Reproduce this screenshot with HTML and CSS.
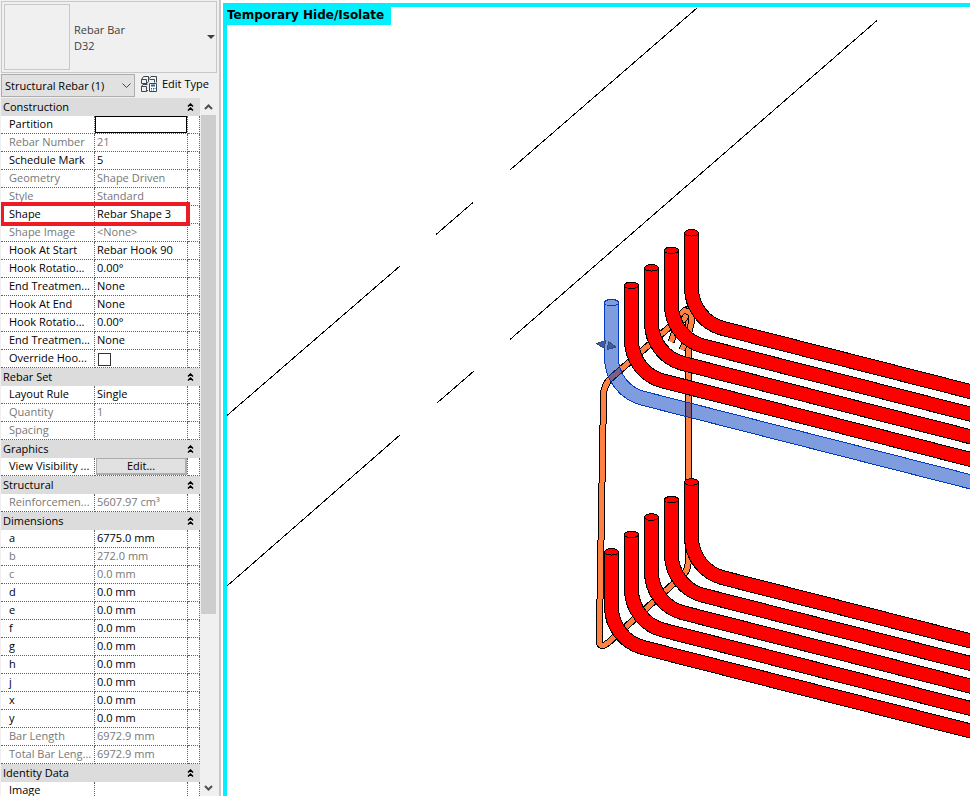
FILE: index.html
```
<!DOCTYPE html>
<html lang="en">
<head>
    <meta charset="UTF-8">
    <meta name="viewport" content="width=device-width, initial-scale=1.0">
    <title>Rebar Properties</title>
    <link rel="stylesheet" href="styles.css">
</head>
<body>
    <div class="app">
        <aside class="properties">
            <button class="type-selector" type="button">
                <span class="type-preview"></span>
                <span class="type-name">Rebar Bar<br>D32</span>
                <svg class="type-arrow" width="8" height="4" viewBox="0 0 8 4"><path d="M0 0H8L4 4Z" fill="#404040"/></svg>
            </button>

            <div class="filter-bar">
                <div class="filter">
                    <select aria-label="Element filter">
                        <option>Structural Rebar (1)</option>
                    </select>
                    <svg width="9" height="6" viewBox="0 0 9 6"><path d="M0.5 0.5L4.5 4.5L8.5 0.5" fill="none" stroke="#444"/></svg>
                </div>
                <button class="edit-type" type="button">
                    <svg width="16" height="16" viewBox="0 0 16 16" fill="none" stroke="#3c4650">
                        <path d="M0.5 3.5L2.5 0.5H7.5V5.5L6 7.5H0.5ZM0.5 3.5H5.5V7.5M8.5 2.5L10 0.5H15.5V6.5M8.5 3.5H13.5V6.5M0.5 10.5L2 8.5H6.5M0.5 10.5H5.5V15.5H0.5ZM5.5 15.5L7 14"/>
                        <path d="M8.5 7.5H15.5V15.5H8.5Z" fill="#fff"/>
                        <path d="M10 9.5H14" stroke="#1c62b9" stroke-width="2"/>
                        <path d="M10 12.5H11M12 12.5H13M13.5 12.5H14.5M10 14H11M12 14H13" stroke="#1c62b9"/>
                    </svg>
                    Edit Type
                </button>
            </div>

            <div class="grid-area">
                <table class="grid">
                    <colgroup><col class="col-name"><col class="col-value"><col class="col-extra"></colgroup>
                    <tbody>
                        <tr class="group"><th colspan="3"><button type="button">Construction <svg class="chevrons"><use href="#chevrons"/></svg></button></th></tr>
                        <tr><td><label for="partition">Partition</label></td><td class="editing"><input type="text" id="partition"></td><td></td></tr>
                        <tr class="off"><td>Rebar Number</td><td>21</td><td></td></tr>
                        <tr><td>Schedule Mark</td><td>5</td><td></td></tr>
                        <tr class="off"><td>Geometry</td><td>Shape Driven</td><td></td></tr>
                        <tr class="off"><td>Style</td><td>Standard</td><td></td></tr>
                        <tr class="marked"><td>Shape</td><td>Rebar Shape 3</td><td></td></tr>
                        <tr class="off"><td>Shape Image</td><td>&lt;None&gt;</td><td></td></tr>
                        <tr><td>Hook At Start</td><td>Rebar Hook 90</td><td></td></tr>
                        <tr><td>Hook Rotatio...</td><td>0.00°</td><td></td></tr>
                        <tr><td>End Treatmen...</td><td>None</td><td></td></tr>
                        <tr><td>Hook At End</td><td>None</td><td></td></tr>
                        <tr><td>Hook Rotatio...</td><td>0.00°</td><td></td></tr>
                        <tr><td>End Treatmen...</td><td>None</td><td></td></tr>
                        <tr><td><label for="override">Override Hoo...</label></td><td><input type="checkbox" id="override"></td><td></td></tr>
                    </tbody>
                    <tbody>
                        <tr class="group"><th colspan="3"><button type="button">Rebar Set <svg class="chevrons"><use href="#chevrons"/></svg></button></th></tr>
                        <tr><td>Layout Rule</td><td>Single</td><td></td></tr>
                        <tr class="off"><td>Quantity</td><td>1</td><td></td></tr>
                        <tr class="off"><td>Spacing</td><td></td><td></td></tr>
                    </tbody>
                    <tbody>
                        <tr class="group"><th colspan="3"><button type="button">Graphics <svg class="chevrons"><use href="#chevrons"/></svg></button></th></tr>
                        <tr><td>View Visibility ...</td><td class="action"><button type="button">Edit...</button></td><td></td></tr>
                    </tbody>
                    <tbody>
                        <tr class="group"><th colspan="3"><button type="button">Structural <svg class="chevrons"><use href="#chevrons"/></svg></button></th></tr>
                        <tr class="off"><td>Reinforcemen...</td><td>5607.97 cm³</td><td></td></tr>
                    </tbody>
                    <tbody>
                        <tr class="group"><th colspan="3"><button type="button">Dimensions <svg class="chevrons"><use href="#chevrons"/></svg></button></th></tr>
                        <tr><td>a</td><td>6775.0 mm</td><td></td></tr>
                        <tr class="off"><td>b</td><td>272.0 mm</td><td></td></tr>
                        <tr class="off"><td>c</td><td>0.0 mm</td><td></td></tr>
                        <tr><td>d</td><td>0.0 mm</td><td></td></tr>
                        <tr><td>e</td><td>0.0 mm</td><td></td></tr>
                        <tr><td>f</td><td>0.0 mm</td><td></td></tr>
                        <tr><td>g</td><td>0.0 mm</td><td></td></tr>
                        <tr><td>h</td><td>0.0 mm</td><td></td></tr>
                        <tr><td>j</td><td>0.0 mm</td><td></td></tr>
                        <tr><td>x</td><td>0.0 mm</td><td></td></tr>
                        <tr><td>y</td><td>0.0 mm</td><td></td></tr>
                        <tr class="off"><td>Bar Length</td><td>6972.9 mm</td><td></td></tr>
                        <tr class="off"><td>Total Bar Leng...</td><td>6972.9 mm</td><td></td></tr>
                    </tbody>
                    <tbody>
                        <tr class="group"><th colspan="3"><button type="button">Identity Data <svg class="chevrons"><use href="#chevrons"/></svg></button></th></tr>
                        <tr><td>Image</td><td></td><td></td></tr>
                    </tbody>
                </table>

                <div class="scrollbar">
                    <svg width="9" height="6" viewBox="0 0 9 6"><path d="M1 5L4.5 1.5L8 5" fill="none" stroke="#505050" stroke-width="2"/></svg>
                    <div class="track"><div class="thumb"></div></div>
                    <svg width="9" height="6" viewBox="0 0 9 6"><path d="M1 1L4.5 4.5L8 1" fill="none" stroke="#505050" stroke-width="2"/></svg>
                </div>
            </div>
        </aside>

        <main class="view">
            <div class="view-mode">Temporary Hide/Isolate</div>
            <svg class="model" viewBox="227 7 743 789" preserveAspectRatio="xMinYMin slice" shape-rendering="crispEdges">
                <defs>
                    <symbol id="chevrons" viewBox="0 0 7 8">
                        <path d="M1 3.5L3.5 1L6 3.5M1 7.5L3.5 5L6 7.5" fill="none" stroke="#000" stroke-width="1.5"/>
                    </symbol>
                    <g id="bar">
                        <path d="M684.5 233V288A49 49 0 0 0 721.3 335.3L1121.3 437.3L1124.7 423.7L724.7 321.7A35 35 0 0 1 698.5 288V233A7 3.5 0 0 0 684.5 233Z"/>
                        <path d="M684.5 233A7 3 0 0 0 698.5 233" fill="none"/>
                    </g>
                </defs>

                <!-- grid lines -->
                <g stroke="#000">
                    <path d="M227 415.5L400 266M436 234.5L473 202.5M510 170L697 8"/>
                    <path d="M227 586L400 435M437 403L474 371M510 339.5L877 20.5"/>
                </g>

                <!-- stirrup -->
                <g class="stirrup-edge">
                    <path id="loop" d="M688.3 316V562Q688 571 682 576L609 642Q599 650 599.3 640L603.5 396Q603.5 386 610 379L674 323L684 311Q687 308 690 312"/>
                    <path id="hook-a" d="M671 342L676 328L688 314"/>
                    <path id="hook-b" d="M682 350L688 336L692 320Q692 310 684 311"/>
                </g>
                <g class="stirrup">
                    <use href="#loop"/>
                </g>
                <g class="stirrup-edge"><use href="#hook-a"/></g>
                <g class="stirrup"><use href="#hook-a"/></g>
                <g class="stirrup-edge"><use href="#hook-b"/></g>
                <g class="stirrup"><use href="#hook-b"/></g>

                <!-- top bars -->
                <g class="rebar">
                    <use href="#bar"/>
                    <use href="#bar" x="-20" y="17.5"/>
                    <use href="#bar" x="-40" y="35"/>
                    <use href="#bar" x="-60" y="52.5"/>
                </g>
                <g class="rebar selected">
                    <use href="#bar" x="-80" y="69.8"/>
                </g>
                <path class="flip" d="M596.5 343.5L605.5 340.5L604.5 348.5ZM608.5 341.5L616 347L607.5 349.5Z"/>

                <!-- bottom bars -->
                <g class="rebar">
                    <use href="#bar" y="249.3"/>
                    <use href="#bar" x="-20" y="266.8"/>
                    <use href="#bar" x="-40" y="284.3"/>
                    <use href="#bar" x="-60" y="301.6"/>
                    <use href="#bar" x="-80" y="319"/>
                </g>
            </svg>
        </main>
    </div>
</body>
</html>
```
FILE: styles.css
```
* {
    box-sizing: border-box;
}

body {
    margin: 0;
    padding-bottom: 4px;
    height: 100vh;
    background-color: #fff;
    font-family: 'Open Sans', 'Noto Sans', sans-serif;
    font-size: 11px;
    color: #000;
}

button,
input,
select {
    font: inherit;
    color: inherit;
    margin: 0;
    padding: 0;
    border: none;
    background: none;
    border-radius: 0;
}

.app {
    display: grid;
    grid-template-columns: 221px 1fr;
    column-gap: 2px;
    height: 100%;
    overflow: hidden;
}

/* Properties palette */

.properties {
    display: flex;
    flex-direction: column;
    min-height: 0;
    padding: 1px 2px 0 1px;
    background-color: #f0f0f0;
    border-right: 2px solid #c8c8c8;
}

.type-selector {
    display: flex;
    align-items: center;
    flex: none;
    width: 216px;
    height: 72px;
    padding: 0 1px 0 2px;
    border: 1px solid #c8c8c8;
    text-align: left;
    color: #404040;
}

.type-preview {
    width: 66px;
    height: 66px;
    border: 1px solid #c8c8c8;
}

.type-name {
    flex: 1;
    margin-left: 4px;
    padding-top: 2px;
    line-height: 16px;
}

.filter-bar {
    display: flex;
    flex: none;
    height: 25px;
    padding-top: 1px;
}

.filter {
    display: flex;
    position: relative;
    width: 134px;
    height: 23px;
}

.filter select {
    appearance: none;
    width: 100%;
    padding-left: 3px;
    border: 1px solid #adadad;
    background-color: #e1e1e1;
}

.filter svg {
    position: absolute;
    right: 4px;
    top: 9px;
    pointer-events: none;
}

.edit-type {
    display: flex;
    align-items: center;
    gap: 5px;
    height: 20px;
    margin-left: 6px;
    line-height: 18px;
}

.grid-area {
    display: flex;
    flex: 1;
    min-height: 0;
    overflow: hidden;
}

.grid {
    flex: none;
    width: 199px;
    table-layout: fixed;
    border-collapse: separate;
    border-spacing: 0;
    align-self: flex-start;
}

.col-name {
    width: 94px;
}

.col-value {
    width: 93px;
}

.col-extra {
    width: 12px;
}

.grid td {
    height: 18px;
    padding: 0 0 0 2px;
    line-height: 16px;
    vertical-align: top;
    background-color: #fff;
    border-right: 1px dotted #606060;
    border-bottom: 1px dotted #606060;
    white-space: nowrap;
}

.grid td:first-child {
    position: relative;
    padding-left: 8px;
}

.grid .off td {
    color: #787878;
}

.grid th {
    height: 18px;
    padding: 0;
    font-weight: normal;
    background-color: #dcdcdc;
}

.grid th button {
    display: flex;
    align-items: center;
    justify-content: space-between;
    width: 100%;
    height: 18px;
    padding: 0 6px 0 2px;
    line-height: 18px;
}

.chevrons {
    width: 7px;
    height: 8px;
}

.grid .editing {
    padding: 0;
}

.editing input {
    display: block;
    width: 100%;
    height: 17px;
    border: 1px solid #000;
}

.grid input[type="checkbox"] {
    appearance: none;
    display: block;
    width: 13px;
    height: 13px;
    margin: 3px 0 0 1px;
    border: 1px solid #333;
}

.grid .action {
    padding: 0 0 0 1px;
}

.action button {
    display: block;
    width: 100%;
    height: 17px;
    line-height: 14px;
    background-color: #e1e1e1;
    border: 1px solid #adadad;
    border-width: 1px 2px 2px 1px;
}

.marked td:first-child::after {
    content: "";
    position: absolute;
    left: -1px;
    top: -4px;
    z-index: 1;
    box-sizing: border-box;
    width: 190px;
    height: 24px;
    border: 4px solid #ed1c24;
}

.scrollbar {
    display: flex;
    flex-direction: column;
    align-items: center;
    width: 15px;
    margin-left: 1px;
    padding: 6px 0 5px;
}

.track {
    flex: 1;
    width: 100%;
    margin: 5px 0;
}

.thumb {
    height: 75%;
    background-color: #cdcdcd;
}

/* Drawing area */

.view {
    position: relative;
    min-width: 0;
    margin-top: 3px;
    border: solid #00f0ff;
    border-width: 4px 0 0 4px;
    overflow: hidden;
}

.view-mode {
    position: absolute;
    left: -4px;
    top: -4px;
    height: 22px;
    padding: 0 7px 0 4px;
    line-height: 24px;
    font-family: 'DejaVu Sans', sans-serif;
    font-size: 12px;
    font-weight: bold;
    background-color: #00f0ff;
}

.model {
    display: block;
    width: 100%;
    height: 100%;
}

.stirrup-edge {
    fill: none;
    stroke: #000;
    stroke-width: 7px;
}

.stirrup {
    fill: none;
    stroke: #ff8040;
    stroke-width: 5px;
}

.rebar {
    fill: #f00;
    stroke: #000;
}

.selected {
    fill: rgba(0, 60, 190, 0.5);
    stroke: #003cbe;
}

.flip {
    fill: #2f5fb8;
    stroke: #404a70;
}
```
